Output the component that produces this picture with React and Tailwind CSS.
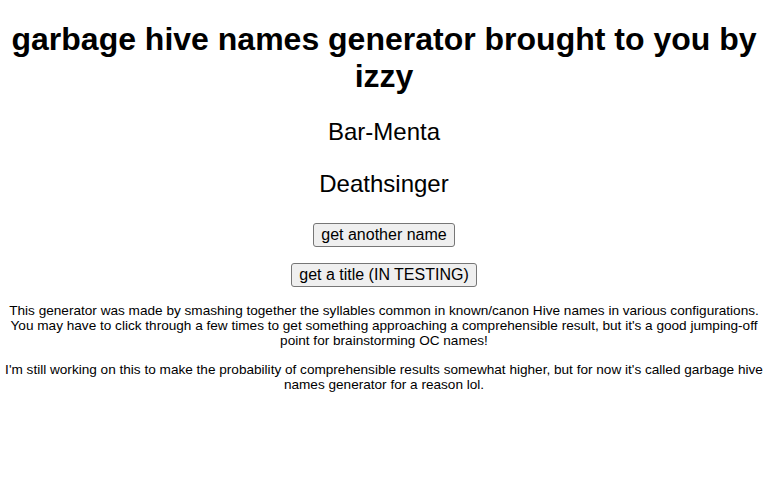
import { useState } from 'react';

const names = ['Bar-Menta', 'Deathsinger'];

export default function App() {
    const [name] = useState(names[0]);
    const [title] = useState(names[1]);

    return (
        <div className="min-h-[480px] bg-white text-center text-black font-['Liberation_Sans',Arial,sans-serif]">
            <h1 className="px-2 pt-[21px] text-[32px] font-bold leading-[37px]">
                garbage hive names generator brought to you by izzy
            </h1>

            <div className="mt-[23px] text-[24px] leading-[28px]">{name}</div>
            <div className="mt-[24px] text-[24px] leading-[28px]">{title}</div>

            <div className="mt-[25px] flex flex-col items-center gap-[16px]">
                <button className="h-[24px] rounded-[3px] border border-[#767676] bg-[#efefef] px-[7px] text-[16px] leading-[18px] text-black">
                    get another name
                </button>
                <button className="h-[24px] rounded-[3px] border border-[#767676] bg-[#efefef] px-[7px] text-[16px] leading-[18px] text-black">
                    get a title (IN TESTING)
                </button>
            </div>

            <div className="px-1 text-[13.6px] leading-[15px]">
                <p className="mt-[16px]">
                    This generator was made by smashing together the syllables common in known/canon Hive names in various configurations. You may have to click through a few times to get something approaching a comprehensible result, but it's a good jumping-off point for brainstorming OC names!
                </p>
                <p className="mt-[14px]">
                    I'm still working on this to make the probability of comprehensible results somewhat higher, but for now it's called garbage hive names generator for a reason lol.
                </p>
            </div>
        </div>
    );
}
